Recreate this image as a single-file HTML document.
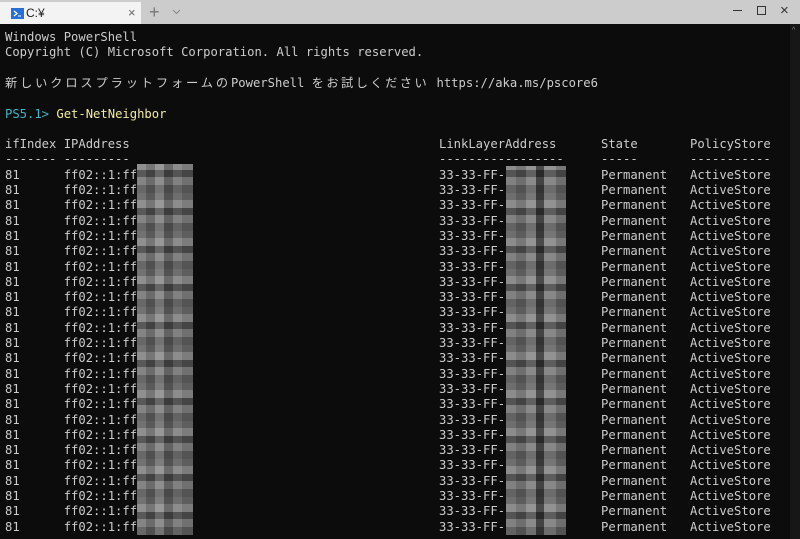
<!DOCTYPE html>
<html><head><meta charset="utf-8"><style>
html,body{margin:0;padding:0;width:800px;height:539px;overflow:hidden;background:#0c0c0c}
#bar{position:absolute;left:0;top:0;width:800px;height:24px;background:#cccccc}
#tab{position:absolute;left:0;top:2px;width:141px;height:22px;background:#f3f3f3}
.t{font-family:"Liberation Sans",sans-serif;font-size:12px;color:#222}
#term{position:absolute;left:0;top:24px;width:790px;height:515px;background:#0c0c0c}
#sb{position:absolute;left:790px;top:24px;width:10px;height:515px;background:#171717}
.l{position:absolute;left:5px;font-family:"DejaVu Sans Mono","Liberation Mono",monospace;font-size:12.2px;line-height:15.3px;color:#cccccc;white-space:pre;height:15.3px}
.jp{font-family:"Liberation Sans","Noto Sans CJK JP",sans-serif;letter-spacing:2.9px}
.c{position:absolute;top:0}
.m1,.m2{position:absolute;background-color:#6b6b6b;
background-image:repeating-linear-gradient(90deg,rgba(255,255,255,.08) 0 9px,rgba(0,0,0,.12) 9px 18px,rgba(255,255,255,.15) 18px 27px,rgba(0,0,0,.2) 27px 36px,rgba(255,255,255,.05) 36px 45px,rgba(0,0,0,.08) 45px 56px),
repeating-linear-gradient(0deg,rgba(0,0,0,.15) 0 8px,rgba(255,255,255,.1) 8px 16px,rgba(0,0,0,.3) 16px 23px,rgba(255,255,255,.18) 23px 31px,rgba(0,0,0,.05) 31px 38px)}
.m1{left:137px;top:164px;width:56px;height:371px}
.m2{left:506px;top:166px;width:60px;height:369px;
background-image:repeating-linear-gradient(90deg,rgba(255,255,255,.05) 0 10px,rgba(0,0,0,.1) 10px 20px,rgba(255,255,255,.12) 20px 30px,rgba(0,0,0,.45) 30px 38px,rgba(255,255,255,.1) 38px 50px,rgba(0,0,0,.1) 50px 60px),
repeating-linear-gradient(0deg,rgba(0,0,0,.15) 0 8px,rgba(255,255,255,.1) 8px 16px,rgba(0,0,0,.3) 16px 23px,rgba(255,255,255,.18) 23px 31px,rgba(0,0,0,.05) 31px 38px)}
</style></head><body>
<div id="bar"></div>
<div id="tab">
<svg style="position:absolute;left:11px;top:6px" width="13" height="11"><rect width="13" height="11" fill="#2a6ed8"/><path d="M3 3l3 2.5-3 2.5" stroke="#fff" stroke-width="1.3" fill="none"/><path d="M7 8h3" stroke="#fff"/></svg>
<span class="t" style="position:absolute;left:26px;top:4px">C:¥</span>
<span class="t" style="position:absolute;left:128px;top:3px;color:#666;font-size:13px">×</span>
</div>
<span class="t" style="position:absolute;left:149px;top:2px;font-size:18px;color:#777">+</span>
<svg style="position:absolute;left:172px;top:9px" width="9" height="6"><path d="M1 1l3.5 3.5L8 1" stroke="#888" fill="none"/></svg>
<div style="position:absolute;left:733px;top:10px;width:9px;height:1px;background:#333"></div>
<div style="position:absolute;left:757px;top:6px;width:7px;height:7px;border:1px solid #333"></div>
<span class="t" style="position:absolute;left:780px;top:2px;font-size:15px;color:#333">×</span>
<div id="term"></div>
<div id="sb"><div style="position:absolute;left:2px;top:3px;color:#888;font-size:7px;font-family:'Liberation Sans'">^</div></div>

<div class="l" style="top:30px">Windows PowerShell</div>
<div class="l" style="top:45.3px">Copyright (C) Microsoft Corporation. All rights reserved.</div>
<div class="l" style="top:75.9px"><span class="jp">新しいクロスプラットフォームの</span>PowerShell <span class="jp" style="letter-spacing:2.5px">をお試しください</span> https://aka.ms/pscore6</div>
<div class="l" style="top:106.5px"><span style="color:#3ab6c7">PS5.1&gt; </span><span style="color:#f0eba2">Get-NetNeighbor</span></div>
<div class="l" style="top:137.1px">ifIndex IPAddress<span class="c" style="left:434px">LinkLayerAddress</span><span class="c" style="left:596px">State</span><span class="c" style="left:685px">PolicyStore</span></div>
<div class="l" style="top:152.4px">------- ---------<span class="c" style="left:434px">-----------------</span><span class="c" style="left:596px">-----</span><span class="c" style="left:685px">-----------</span></div>

<div class="l" style="top:167.7px">81      ff02::1:ff<span class="c" style="left:434px">33-33-FF-</span><span class="c" style="left:596px">Permanent</span><span class="c" style="left:685px">ActiveStore</span></div>
<div class="l" style="top:183.0px">81      ff02::1:ff<span class="c" style="left:434px">33-33-FF-</span><span class="c" style="left:596px">Permanent</span><span class="c" style="left:685px">ActiveStore</span></div>
<div class="l" style="top:198.3px">81      ff02::1:ff<span class="c" style="left:434px">33-33-FF-</span><span class="c" style="left:596px">Permanent</span><span class="c" style="left:685px">ActiveStore</span></div>
<div class="l" style="top:213.6px">81      ff02::1:ff<span class="c" style="left:434px">33-33-FF-</span><span class="c" style="left:596px">Permanent</span><span class="c" style="left:685px">ActiveStore</span></div>
<div class="l" style="top:228.9px">81      ff02::1:ff<span class="c" style="left:434px">33-33-FF-</span><span class="c" style="left:596px">Permanent</span><span class="c" style="left:685px">ActiveStore</span></div>
<div class="l" style="top:244.2px">81      ff02::1:ff<span class="c" style="left:434px">33-33-FF-</span><span class="c" style="left:596px">Permanent</span><span class="c" style="left:685px">ActiveStore</span></div>
<div class="l" style="top:259.5px">81      ff02::1:ff<span class="c" style="left:434px">33-33-FF-</span><span class="c" style="left:596px">Permanent</span><span class="c" style="left:685px">ActiveStore</span></div>
<div class="l" style="top:274.8px">81      ff02::1:ff<span class="c" style="left:434px">33-33-FF-</span><span class="c" style="left:596px">Permanent</span><span class="c" style="left:685px">ActiveStore</span></div>
<div class="l" style="top:290.1px">81      ff02::1:ff<span class="c" style="left:434px">33-33-FF-</span><span class="c" style="left:596px">Permanent</span><span class="c" style="left:685px">ActiveStore</span></div>
<div class="l" style="top:305.4px">81      ff02::1:ff<span class="c" style="left:434px">33-33-FF-</span><span class="c" style="left:596px">Permanent</span><span class="c" style="left:685px">ActiveStore</span></div>
<div class="l" style="top:320.7px">81      ff02::1:ff<span class="c" style="left:434px">33-33-FF-</span><span class="c" style="left:596px">Permanent</span><span class="c" style="left:685px">ActiveStore</span></div>
<div class="l" style="top:336.0px">81      ff02::1:ff<span class="c" style="left:434px">33-33-FF-</span><span class="c" style="left:596px">Permanent</span><span class="c" style="left:685px">ActiveStore</span></div>
<div class="l" style="top:351.3px">81      ff02::1:ff<span class="c" style="left:434px">33-33-FF-</span><span class="c" style="left:596px">Permanent</span><span class="c" style="left:685px">ActiveStore</span></div>
<div class="l" style="top:366.6px">81      ff02::1:ff<span class="c" style="left:434px">33-33-FF-</span><span class="c" style="left:596px">Permanent</span><span class="c" style="left:685px">ActiveStore</span></div>
<div class="l" style="top:381.9px">81      ff02::1:ff<span class="c" style="left:434px">33-33-FF-</span><span class="c" style="left:596px">Permanent</span><span class="c" style="left:685px">ActiveStore</span></div>
<div class="l" style="top:397.2px">81      ff02::1:ff<span class="c" style="left:434px">33-33-FF-</span><span class="c" style="left:596px">Permanent</span><span class="c" style="left:685px">ActiveStore</span></div>
<div class="l" style="top:412.5px">81      ff02::1:ff<span class="c" style="left:434px">33-33-FF-</span><span class="c" style="left:596px">Permanent</span><span class="c" style="left:685px">ActiveStore</span></div>
<div class="l" style="top:427.8px">81      ff02::1:ff<span class="c" style="left:434px">33-33-FF-</span><span class="c" style="left:596px">Permanent</span><span class="c" style="left:685px">ActiveStore</span></div>
<div class="l" style="top:443.1px">81      ff02::1:ff<span class="c" style="left:434px">33-33-FF-</span><span class="c" style="left:596px">Permanent</span><span class="c" style="left:685px">ActiveStore</span></div>
<div class="l" style="top:458.4px">81      ff02::1:ff<span class="c" style="left:434px">33-33-FF-</span><span class="c" style="left:596px">Permanent</span><span class="c" style="left:685px">ActiveStore</span></div>
<div class="l" style="top:473.7px">81      ff02::1:ff<span class="c" style="left:434px">33-33-FF-</span><span class="c" style="left:596px">Permanent</span><span class="c" style="left:685px">ActiveStore</span></div>
<div class="l" style="top:489.0px">81      ff02::1:ff<span class="c" style="left:434px">33-33-FF-</span><span class="c" style="left:596px">Permanent</span><span class="c" style="left:685px">ActiveStore</span></div>
<div class="l" style="top:504.3px">81      ff02::1:ff<span class="c" style="left:434px">33-33-FF-</span><span class="c" style="left:596px">Permanent</span><span class="c" style="left:685px">ActiveStore</span></div>
<div class="l" style="top:519.6px">81      ff02::1:ff<span class="c" style="left:434px">33-33-FF-</span><span class="c" style="left:596px">Permanent</span><span class="c" style="left:685px">ActiveStore</span></div>
<div class="m1"></div>
<div class="m2"></div>
</body></html>
